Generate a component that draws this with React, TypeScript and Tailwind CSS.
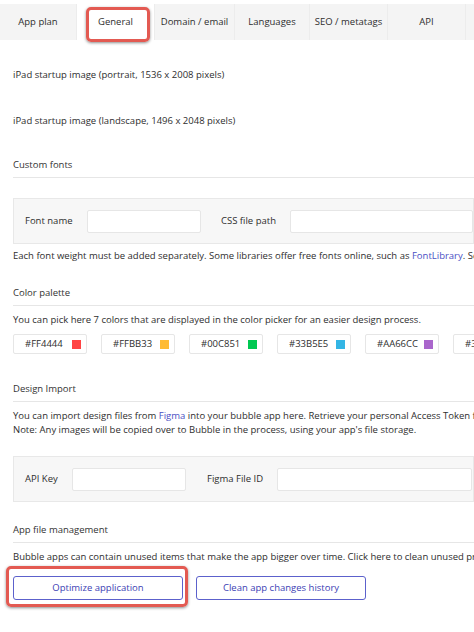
const font = { fontFamily: '"Open Sans", "Noto Sans", sans-serif' };

const tabs = ['App plan', 'General', 'Domain / email', 'Languages', 'SEO / metatags', 'API'];
const tabWidths = ['w-[77px]', 'w-[78px]', 'w-[80px]', 'w-[75px]', 'w-[78px]', 'w-[78px]'];

const swatches = [
  { hex: '#FF4444', dot: 'bg-[#ff4444]' },
  { hex: '#FFBB33', dot: 'bg-[#ffbb33]' },
  { hex: '#00C851', dot: 'bg-[#00c851]' },
  { hex: '#33B5E5', dot: 'bg-[#33b5e5]' },
  { hex: '#AA66CC', dot: 'bg-[#aa66cc]' },
  { hex: '#3F729B', dot: 'bg-[#3f729b]' },
];

function SectionTitle({ children }: { children: string }) {
  return (
    <div className="border-b border-[#e6e6e6] pb-[5px] leading-[14px] text-[#333]">{children}</div>
  );
}

export default function App() {
  return (
    <div className="w-[474px] h-[632px] overflow-hidden bg-white text-[9.5px] text-[#2e2e2e]" style={font}>
      <div className="mt-[4px] flex h-[36px] w-[600px] bg-[#f4f4f4]">
        {tabs.map((t, i) => (
          <div
            key={t}
            className={`relative flex shrink-0 items-center justify-center whitespace-nowrap border-r border-[#ececec] ${tabWidths[i]} ${
              i === 1 ? 'bg-white' : ''
            }`}
          >
            {t}
            {i === 1 && (
              <div className="absolute left-[9px] top-[3px] h-[35px] w-[64px] rounded-[5px] border-[3px] border-[#e35a52] shadow-[0_1px_3px_rgba(0,0,0,0.45)]" />
            )}
          </div>
        ))}
      </div>

      <div className="pl-[13px] leading-[14px]">
        <div className="mt-[28px] whitespace-nowrap">iPad startup image (portrait, 1536 x 2008 pixels)</div>
        <div className="mt-[32px] whitespace-nowrap">iPad startup image (landscape, 1496 x 2048 pixels)</div>

        <div className="mt-[30px]">
          <SectionTitle>Custom fonts</SectionTitle>
        </div>
        <div className="mt-[20px] flex h-[46px] items-center border border-[#e8e8e8] bg-[#f7f7f7] pl-[11px]">
          <span className="w-[62px]">Font name</span>
          <div className="h-[23px] w-[114px] rounded-[2px] border border-[#e6e6e6] bg-white" />
          <span className="ml-[20px] w-[69px]">CSS file path</span>
          <div className="h-[23px] flex-1 rounded-[2px] border border-[#e6e6e6] bg-white" />
        </div>
        <div className="mt-[5px] whitespace-nowrap">
          Each font weight must be added separately. Some libraries offer free fonts online, such as{' '}
          <span className="text-[#4a4fc4]">FontLibrary</span>. See more
        </div>

        <div className="mt-[23px]">
          <SectionTitle>Color palette</SectionTitle>
        </div>
        <div className="mt-[7px] whitespace-nowrap">
          You can pick here 7 colors that are displayed in the color picker for an easier design process.
        </div>
        <div className="mt-[7px] flex gap-[14px]">
          {swatches.map((s) => (
            <div
              key={s.hex}
              className="flex h-[20px] w-[74px] shrink-0 items-center rounded-[2px] border border-[#e6e6e6] bg-white pl-[11px]"
            >
              <span className="w-[47px] shrink-0">{s.hex}</span>
              <span className={`h-[9px] w-[9px] shrink-0 ${s.dot}`} />
            </div>
          ))}
        </div>

        <div className="mt-[28px]">
          <SectionTitle>Design Import</SectionTitle>
        </div>
        <div className="mt-[7px] whitespace-nowrap">
          You can import design files from <span className="text-[#4a4fc4]">Figma</span> into your bubble app here.
          Retrieve your personal Access Token from Figma
          <br />
          Note: Any images will be copied over to Bubble in the process, using your app's file storage.
        </div>
        <div className="mt-[19px] flex h-[46px] items-center border border-[#e8e8e8] bg-[#f7f7f7] pl-[11px]">
          <span className="w-[47px]">API Key</span>
          <div className="h-[23px] w-[114px] rounded-[2px] border border-[#e6e6e6] bg-white" />
          <span className="ml-[21px] w-[70px]">Figma File ID</span>
          <div className="h-[23px] w-[195px] rounded-[2px] border border-[#e6e6e6] bg-white" />
        </div>

        <div className="mt-[21px]">
          <SectionTitle>App file management</SectionTitle>
        </div>
        <div className="mt-[7px] whitespace-nowrap">
          Bubble apps can contain unused items that make the app bigger over time. Click here to clean unused properties.
        </div>
        <div className="mt-[12px] flex gap-[13px]">
          <div className="relative">
            <button className="h-[24px] w-[170px] rounded-[3px] border border-[#5c61cc] bg-white text-[#3c41b4]">
              Optimize application
            </button>
            <div className="absolute left-[-7px] top-[-10px] h-[41px] w-[182px] rounded-[5px] border-[3px] border-[#e35a52] shadow-[0_1px_3px_rgba(0,0,0,0.45)]" />
          </div>
          <button className="h-[24px] w-[170px] rounded-[3px] border border-[#5c61cc] bg-white text-[#3c41b4]">
            Clean app changes history
          </button>
        </div>
      </div>
    </div>
  );
}
